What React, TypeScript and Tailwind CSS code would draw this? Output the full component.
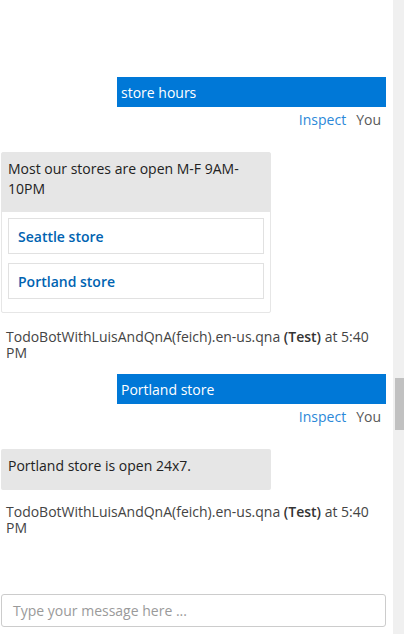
import React from 'react'

const FONT = { fontFamily: '"Open Sans", "Noto Sans", sans-serif' }

function UserMessage({ text }: { text: string }) {
  return (
    <div className="flex flex-col">
      <div className="ml-[117px] mr-[7px] flex h-[30px] items-center bg-[#0078d7] pl-[4px] text-[14px] text-white">
        {text}
      </div>
      <div className="mr-[12px] mt-[3px] flex h-[18px] items-center justify-end gap-[10px] text-[14px]">
        <span className="text-[#2b88d8]">Inspect</span>
        <span className="text-[#595959]">You</span>
      </div>
    </div>
  )
}

function Stamp() {
  return (
    <div className="pl-[6px] pr-[20px] text-[14px] leading-[16px] text-[#444]">
      TodoBotWithLuisAndQnA(feich).en-us.qna <span className="font-semibold text-[#333]">(Test)</span> at 5:40 PM
    </div>
  )
}

function CardButton({ label }: { label: string }) {
  return (
    <div className="flex h-[36px] items-center border border-[#e1e1e1] pl-[9px] text-[14px] font-semibold text-[#0063b1]">
      {label}
    </div>
  )
}

export default function App() {
  return (
    <div className="flex h-[634px] w-[404px] overflow-hidden bg-white" style={FONT}>
      <div className="flex flex-1 flex-col">
        <div className="flex flex-1 flex-col pt-[77px]">
          <UserMessage text="store hours" />

          <div className="ml-[1px] mt-[24px] w-[270px] rounded-[2px] border border-[#e6e6e6]">
            <div className="h-[59px] bg-[#e6e6e6] px-[6px] pt-[6px] text-[14px] leading-[20px] text-[#222]">
              Most our stores are open M-F 9AM-10PM
            </div>
            <div className="flex flex-col gap-[9px] px-[6px] pb-[13px] pt-[6px]">
              <CardButton label="Seattle store" />
              <CardButton label="Portland store" />
            </div>
          </div>

          <div className="mt-[16px]">
            <Stamp />
          </div>

          <div className="mt-[13px]">
            <UserMessage text="Portland store" />
          </div>

          <div className="ml-[1px] mt-[24px] flex h-[41px] w-[270px] rounded-[2px] bg-[#e6e6e6] px-[7px] pt-[7px] text-[14px] leading-[20px] text-[#222]">
            Portland store is open 24x7.
          </div>

          <div className="mt-[14px]">
            <Stamp />
          </div>
        </div>

        <div className="mb-[7px] ml-[1px] mr-[7px] flex h-[33px] items-center rounded-[3px] border border-[#cccccc] pl-[11px] text-[14px] text-[#9a9a9a]">
          Type your message here ...
        </div>
      </div>

      <div className="flex w-[11px] flex-col bg-[#f0f0f0]">
        <div className="ml-[2px] mt-[378px] h-[52px] bg-[#c1c1c1]" />
      </div>
    </div>
  )
}
